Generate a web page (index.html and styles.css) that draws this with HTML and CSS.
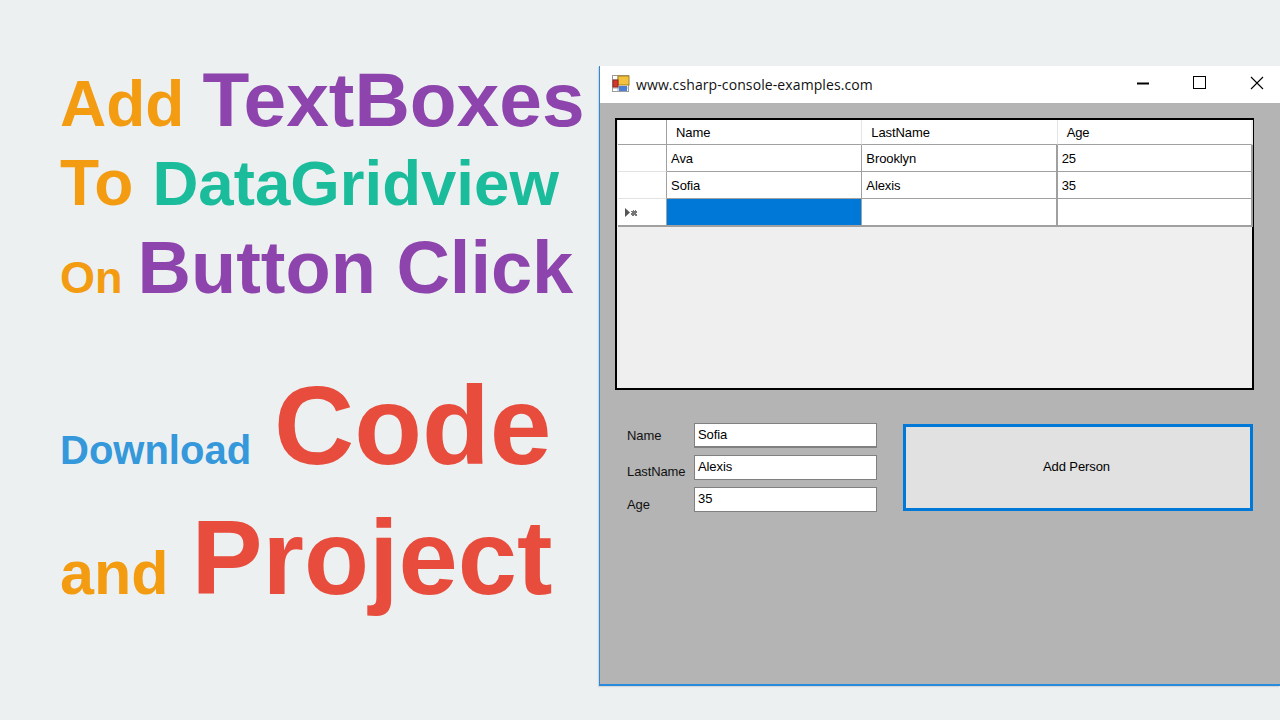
FILE: index.html
```html
<!DOCTYPE html>
<html lang="en">

<head>
    <meta charset="UTF-8">
    <meta name="viewport" content="width=device-width, initial-scale=1.0">
    <title>Add TextBoxes To DataGridview</title>
    <link rel="stylesheet" href="styles.css">
</head>

<body>
    <div class="page">
        <div class="headline">
            <div class="line line-add"><span class="orange size-add">Add</span><span class="purple size-textboxes">TextBoxes</span></div>
            <div class="line line-to"><span class="orange size-to">To</span><span class="teal size-grid">DataGridview</span></div>
            <div class="line line-on"><span class="orange size-on">On</span><span class="purple size-button">Button Click</span></div>
            <div class="line line-download"><span class="blue size-download">Download</span><span class="red size-code">Code</span></div>
            <div class="line line-and"><span class="orange size-and">and</span><span class="red size-project">Project</span></div>
        </div>

        <div class="window">
            <div class="title-bar">
                <svg class="app-icon" width="18" height="18" viewBox="0 0 18 18">
                    <rect x="0.5" y="0.5" width="16" height="16" fill="#fff" stroke="#9a9a9a" />
                    <path d="M6 1v16M1 5h5M1 13h16M12 13v4" stroke="#a8a8a8" fill="none" />
                    <rect x="6" y="1" width="11" height="9" fill="#f2c23e" stroke="#a8801c" />
                    <rect x="1" y="5" width="5" height="7" fill="#d9342b" stroke="#8c2a24" />
                    <rect x="7" y="11" width="8" height="5" fill="#4a7fd4" />
                </svg>
                <span class="title-text">www.csharp-console-examples.com</span>
                <div class="window-buttons">
                    <svg width="14" height="14" viewBox="0 0 14 14"><path d="M1 7.5h12" stroke="#000" stroke-width="2" /></svg>
                    <svg width="14" height="14" viewBox="0 0 14 14"><rect x="0.5" y="0.5" width="12" height="12" fill="none" stroke="#000" /></svg>
                    <svg width="14" height="14" viewBox="0 0 14 14"><path d="M1 1l12 12M13 1L1 13" stroke="#000" stroke-width="1.1" fill="none" /></svg>
                </div>
            </div>

            <div class="window-body">
                <div class="grid-box">
                    <table class="data-grid">
                        <tr class="head-row">
                            <th class="row-head"></th>
                            <th>Name</th>
                            <th>LastName</th>
                            <th>Age</th>
                        </tr>
                        <tr>
                            <td class="row-head"></td>
                            <td>Ava</td>
                            <td class="col-last">Brooklyn</td>
                            <td>25</td>
                        </tr>
                        <tr>
                            <td class="row-head"></td>
                            <td>Sofia</td>
                            <td class="col-last">Alexis</td>
                            <td>35</td>
                        </tr>
                        <tr class="last-row">
                            <td class="row-head">
                                <svg class="new-row-mark" width="14" height="11" viewBox="0 0 14 11">
                                    <path d="M1 1v9l5-4.500z" fill="#555" />
                                    <path d="M7 4h2V3h1v1h1V3h1v1h1v2h-1v1h1v2h-2V8h-1v1H8V8H7V6h1V5H7z" fill="#777" />
                                </svg>
                            </td>
                            <td class="selected"></td>
                            <td class="col-last"></td>
                            <td></td>
                        </tr>
                    </table>
                </div>

                <div class="form-area">
                    <div class="fields">
                        <label class="label-name">Name</label>
                        <div class="text-box box-name">Sofia</div>
                        <label class="label-last">LastName</label>
                        <div class="text-box">Alexis</div>
                        <label class="label-age">Age</label>
                        <div class="text-box">35</div>
                    </div>
                    <button class="add-btn">Add Person</button>
                </div>
            </div>
        </div>
    </div>
</body>

</html>
```

FILE: styles.css
```css
* {
    box-sizing: border-box;
}

body {
    margin: 0;
    padding: 0;
    background-color: #ecf0f1;
    font-family: 'Liberation Sans', Arial, sans-serif;
    overflow: hidden;
}

.page {
    display: flex;
    width: 1280px;
    height: 720px;
}

/* left side text */
.headline {
    width: 599px;
    flex: none;
    padding-left: 60px;
    font-weight: bold;
}

.line {
    display: flex;
    align-items: baseline;
    white-space: nowrap;
}

.line-add {
    height: 78px;
    margin-top: 67px;
    line-height: 66px;
    gap: 18px;
}

.line-to {
    height: 78px;
    line-height: 76px;
    gap: 19px;
}

.line-on {
    height: 118px;
    line-height: 90px;
    gap: 15px;
}

.line-download {
    height: 152px;
    line-height: 170px;
    gap: 23px;
}

.line-and {
    height: 130px;
    line-height: 130px;
    gap: 23px;
}

.orange { color: #f39c12; }
.purple { color: #8e44ad; }
.teal { color: #1abc9c; }
.blue { color: #3498db; }
.red { color: #e74c3c; }

.size-add { font-size: 64px; }
.size-textboxes { font-size: 76.700px; }
.size-to { font-size: 64px; }
.size-grid { font-size: 63.600px; }
.size-on { font-size: 45px; }
.size-button { font-size: 74px; }
.size-download { font-size: 40px; }
.size-code { font-size: 111px; }
.size-and { font-size: 61px; }
.size-project { font-size: 106.500px; }

/* form window */
.window {
    width: 681px;
    height: 620px;
    margin-top: 66px;
    display: flex;
    flex-direction: column;
    border-left: 1px solid #2a8bdc;
    border-bottom: 2px solid #2a8bdc;
    box-shadow: -1px 1px 1px rgba(0, 0, 0, 0.1);
}

.title-bar {
    height: 37px;
    flex: none;
    background-color: #fff;
    display: flex;
    align-items: center;
    padding-left: 12px;
}

.app-icon {
    margin-right: 6px;
    margin-top: -2px;
}

.title-text {
    font-family: 'Open Sans', sans-serif;
    font-size: 14px;
    letter-spacing: 0.100px;
    color: #111;
    margin-top: -1px;
}

.window-buttons {
    margin-left: auto;
    display: flex;
    gap: 43px;
    padding-right: 16px;
    margin-top: -3px;
}

.window-body {
    flex: 1;
    background-color: #b4b4b4;
    padding: 15px 26px 0 15px;
}

.grid-box {
    width: 639px;
    height: 272px;
    background-color: #efefef;
    border: 2px solid #000;
    padding-left: 1px;
}

.data-grid {
    width: 635px;
    table-layout: fixed;
    border-collapse: separate;
    border-spacing: 0;
    font-size: 13px;
    letter-spacing: -0.100px;
    color: #000;
}

.data-grid th,
.data-grid td {
    height: 27px;
    width: 195px;
    padding: 0 0 0 4px;
    background-color: #fff;
    border-right: 1px solid #a0a0a0;
    border-bottom: 1px solid #a0a0a0;
    font-weight: normal;
    text-align: left;
}

.data-grid th {
    height: 25px;
    padding-left: 9px;
    border-right-color: #e4e4e4;
}

.data-grid .row-head {
    width: 49px;
    padding: 0 0 0 6px;
    border-bottom-color: #e2e2e2;
    border-right-color: #a0a0a0;
}

.data-grid .head-row .row-head {
    border-bottom-color: #a0a0a0;
}

.data-grid .last-row td {
    height: 28px;
    border-bottom-width: 2px;
    border-bottom-color: #a0a0a0;
}

.data-grid .col-last {
    border-right-width: 2px;
}

.data-grid td:last-child,
.data-grid th:last-child {
    border-right: 2px solid #a0a0a0;
}

.data-grid th:last-child {
    border-right-color: #efefef;
}

.data-grid .selected {
    background-color: #0078d7;
}

.new-row-mark {
    display: block;
}

.form-area {
    display: flex;
    margin-top: 33px;
    padding-left: 12px;
}

.fields {
    width: 250px;
    display: grid;
    grid-template-columns: 67px 183px;
    grid-auto-rows: 25px;
    row-gap: 7px;
    font-size: 13px;
    letter-spacing: -0.100px;
    color: #111;
}

.fields label {
    line-height: 16px;
}

.label-name { padding-top: 5px; }
.label-last { padding-top: 9px; }
.label-age { padding-top: 10px; }

.text-box {
    background-color: #fff;
    border: 1px solid #808080;
    padding-left: 3px;
    line-height: 22px;
    color: #000;
}

.box-name {
    border-bottom-width: 2px;
}

.add-btn {
    width: 350px;
    height: 87px;
    margin-top: 1px;
    margin-left: 26px;
    background-color: #e1e1e1;
    border: 3px solid #0078d7;
    font-family: 'Liberation Sans', Arial, sans-serif;
    font-size: 13px;
    letter-spacing: -0.100px;
    color: #000;
    padding: 0 3px 2px 0;
}
```
